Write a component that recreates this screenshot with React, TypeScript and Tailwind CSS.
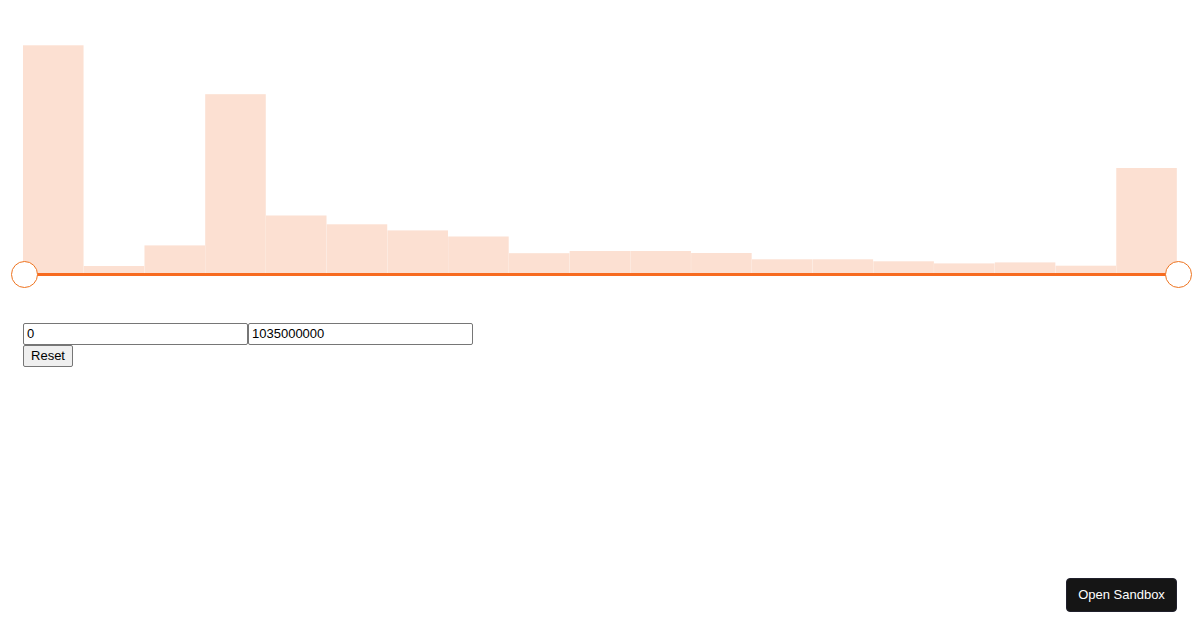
import { useState } from "react";

const MIN = 0;
const MAX = 1035000000;
const CHART_HEIGHT = 230;

const buckets = [
    229.7, 9, 29.6, 180.8, 59.5, 50.7, 44.6, 38.5, 21.8, 24,
    24, 22, 15.7, 15.7, 13.7, 11.6, 12.6, 9.3, 107,
];

function Histogram() {
    return (
        <svg
            className="block w-full h-[230px]"
            viewBox={`0 0 ${buckets.length} ${CHART_HEIGHT}`}
            preserveAspectRatio="none"
            role="img"
            aria-label="Distribution of values"
        >
            {buckets.map((height, index) => (
                <rect
                    key={index}
                    x={index}
                    y={CHART_HEIGHT - height}
                    width={0.997}
                    height={height}
                    fill="#fce0d2"
                />
            ))}
        </svg>
    );
}

interface FieldProps {
    label: string;
    value: number;
    onChange: (value: number) => void;
}

function Thumb({ label, value, onChange }: FieldProps) {
    return (
        <input
            type="range"
            aria-label={label}
            min={MIN}
            max={MAX}
            value={value}
            onChange={(e) => onChange(Number(e.target.value))}
            className="col-start-1 row-start-1 w-full h-[27px] appearance-none bg-transparent pointer-events-none
                [&::-webkit-slider-thumb]:pointer-events-auto
                [&::-webkit-slider-thumb]:appearance-none
                [&::-webkit-slider-thumb]:size-[27px]
                [&::-webkit-slider-thumb]:rounded-full
                [&::-webkit-slider-thumb]:border
                [&::-webkit-slider-thumb]:border-[#ee7420]
                [&::-webkit-slider-thumb]:bg-white
                [&::-webkit-slider-thumb]:cursor-pointer"
        />
    );
}

function NumberBox({ label, value, onChange }: FieldProps) {
    return (
        <input
            type="text"
            inputMode="numeric"
            aria-label={label}
            value={value}
            onChange={(e) => onChange(Number(e.target.value) || 0)}
            className="w-[225px] h-[22px] px-[3px] pb-[2px] border border-[#767676] rounded-xs bg-white"
        />
    );
}

export default function App() {
    const [from, setFrom] = useState(MIN);
    const [to, setTo] = useState(MAX);

    const left = ((from - MIN) / (MAX - MIN)) * 100;
    const right = 100 - ((to - MIN) / (MAX - MIN)) * 100;

    const changeFrom = (value: number) => setFrom(Math.min(value, to));
    const changeTo = (value: number) => setTo(Math.max(value, from));

    const reset = () => {
        setFrom(MIN);
        setTo(MAX);
    };

    return (
        <main className="min-h-screen flex flex-col bg-white text-black text-[13px] leading-4 font-['Liberation_Sans',Arial,sans-serif]">
            <div className="px-[23px] pt-[45px]">
                <Histogram />
            </div>
            <div className="grid items-center -mt-[14px] ml-[11px] mr-2">
                <div className="col-start-1 row-start-1 mx-[13px] h-[3px]">
                    <div
                        className="h-full bg-[#f76b20]"
                        style={{ marginLeft: `${left}%`, marginRight: `${right}%` }}
                    />
                </div>
                <Thumb label="From" value={from} onChange={changeFrom} />
                <Thumb label="To" value={to} onChange={changeTo} />
            </div>

            <div className="px-[23px] pt-[35px]">
                <div className="flex">
                    <NumberBox label="From" value={from} onChange={changeFrom} />
                    <NumberBox label="To" value={to} onChange={changeTo} />
                </div>
                <button
                    type="button"
                    onClick={reset}
                    className="block w-[50px] h-[22px] border border-[#767676] rounded-xs bg-[#efefef]"
                >
                    Reset
                </button>
            </div>

            <div className="mt-auto flex justify-end pr-[23px] pb-[18px]">
                <button
                    type="button"
                    className="h-[34px] w-[111px] border border-[#20202c] rounded-sm bg-[#151515] text-white"
                >
                    Open Sandbox
                </button>
            </div>
        </main>
    );
}
